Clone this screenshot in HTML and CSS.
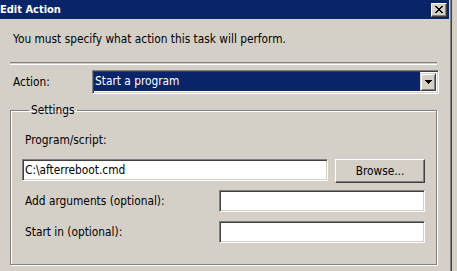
FILE: index.html
```html
<!DOCTYPE html>
<html>
<head>
<meta charset="utf-8">
<link rel="stylesheet" href="styles.css">
</head>
<body>
<div class="window">
  <div class="titlebar">
    <span class="title">Edit Action</span>
    <div class="close">
      <svg width="8" height="7" viewBox="0 0 8 7" shape-rendering="crispEdges">
        <path d="M0 0h2v1h-2zM6 0h2v1h-2zM1 1h2v1h-2zM5 1h2v1h-2zM2 2h4v1h-4zM3 3h2v1h-2zM2 4h4v1h-4zM1 5h2v1h-2zM5 5h2v1h-2zM0 6h2v1h-2zM6 6h2v1h-2z" fill="#000"/>
      </svg>
    </div>
  </div>
  <div class="content">
    <p class="intro">You must specify what action this task will perform.</p>
    <div class="sep"></div>
    <div class="action-row">
      <span class="action-label">Action:</span>
      <div class="combo">
        <div class="combo-value">Start a program</div>
        <div class="combo-btn">
          <svg width="7" height="4" viewBox="0 0 7 4" shape-rendering="crispEdges">
            <path d="M0 0h7v1h-7zM1 1h5v1h-5zM2 2h3v1h-3zM3 3h1v1h-1z" fill="#000"/>
          </svg>
        </div>
      </div>
    </div>
    <fieldset class="group">
      <legend class="legend">Settings</legend>
      <div class="field-label">Program/script:</div>
      <div class="prog-row">
        <div class="input prog-input">C:\afterreboot.cmd</div>
        <div class="button">Browse...</div>
      </div>
      <div class="field-row args-row">
        <span class="row-label">Add arguments (optional):</span>
        <div class="input side-input"></div>
      </div>
      <div class="field-row start-row">
        <span class="row-label">Start in (optional):</span>
        <div class="input side-input"></div>
      </div>
    </fieldset>
  </div>
</div>
</body>
</html>
```

FILE: styles.css
```css
html, body {
  margin: 0;
  padding: 0;
}
body {
  background: #d4d0c8;
  width: 457px;
  height: 271px;
  overflow: hidden;
  font-family: "DejaVu Sans Condensed", "DejaVu Sans", sans-serif;
  font-size: 11.8px;
  color: #000;
}
.window {
  width: 449px;
  height: 271px;
  background: #d4d0c8;
  border-right: 1px solid #d4d0c8;
  box-shadow: 1px 0 0 #808080, 2px 0 0 #404040;
}
.titlebar {
  height: 19px;
  background: #0a246a;
  display: flex;
  align-items: center;
  justify-content: space-between;
  padding-right: 2px;
}
.title {
  color: #fff;
  font-weight: bold;
  font-size: 11px;
  line-height: 13px;
  padding-left: 0;
}
.close {
  width: 14px;
  height: 12px;
  background: #d4d0c8;
  border-top: 1px solid #fff;
  border-left: 1px solid #fff;
  border-right: 1px solid #404040;
  border-bottom: 1px solid #404040;
  box-shadow: inset -1px -1px 0 #808080;
  display: flex;
  align-items: center;
  justify-content: center;
}
.close svg { display: block; margin-left: -1px; margin-top: -1px; }
.content {
  padding: 0;
}
.intro {
  margin: 14px 0 0 13px;
  line-height: 13px;
}
.sep {
  margin: 16px 0 0 10px;
  width: 427px;
  height: 1px;
  border-top: 1px solid #808080;
  border-bottom: 1px solid #fff;
}
.action-row {
  display: flex;
  align-items: center;
  margin-top: 5px;
  padding-left: 13px;
}
.action-label {
  width: 79px;
  line-height: 13px;
}
.combo {
  width: 341px;
  height: 18px;
  border-top: 1px solid #808080;
  border-left: 1px solid #808080;
  border-right: 1px solid #fff;
  border-bottom: 1px solid #fff;
  box-shadow: inset 1px 1px 0 #404040, inset -1px -1px 0 #d4d0c8;
  padding: 2px;
  display: flex;
  background: #fff;
}
.combo-value {
  flex: 1;
  background: #0a246a;
  color: #fff;
  line-height: 18px;
  padding-left: 1px;
  margin: -1px 0 0 -1px;
  height: 19px;
}
.combo-btn {
  width: 14px;
  height: 16px;
  background: #d4d0c8;
  border-top: 1px solid #d4d0c8;
  border-left: 1px solid #d4d0c8;
  border-right: 1px solid #404040;
  border-bottom: 1px solid #404040;
  box-shadow: inset 1px 1px 0 #fff, inset -1px -1px 0 #808080;
  display: flex;
  align-items: center;
  justify-content: center;
}
.combo-btn svg { display: block; }
.group {
  margin: 9px 0 0 10px;
  width: 403px;
  padding: 0 11px 20px 11px;
  border: 1px solid #808080;
  box-shadow: inset 1px 1px 0 #fff, 1px 1px 0 #fff;
  min-height: 140px;
}
.legend {
  margin-left: 7px;
  padding: 0 2px;
  line-height: 14px;
}
.field-label {
  margin-top: 17px;
  padding-left: 3px;
  line-height: 13px;
}
.prog-row {
  display: flex;
  align-items: flex-start;
  margin-top: 12px;
  gap: 7px;
}
.input {
  flex: none;
  height: 18px;
  background: #fff;
  border-top: 1px solid #808080;
  border-left: 1px solid #808080;
  border-right: 1px solid #fff;
  border-bottom: 1px solid #fff;
  box-shadow: inset 1px 1px 0 #404040, inset -1px -1px 0 #d4d0c8;
  padding: 1px 2px;
  line-height: 18px;
  box-sizing: content-box;
}
.prog-input {
  width: 300px;
}
.button {
  flex: none;
  width: 88px;
  height: 20px;
  background: #d4d0c8;
  border-top: 1px solid #fff;
  border-left: 1px solid #fff;
  border-right: 1px solid #404040;
  border-bottom: 1px solid #404040;
  box-shadow: inset -1px -1px 0 #808080;
  padding: 1px 0;
  text-align: center;
  line-height: 21px;
}
.field-row {
  display: flex;
  align-items: center;
  justify-content: space-between;
}
.args-row { margin-top: 7px; }
.start-row { margin-top: 9px; }
.row-label {
  padding-left: 3px;
  line-height: 13px;
}
.side-input {
  width: 200px;
}
```
